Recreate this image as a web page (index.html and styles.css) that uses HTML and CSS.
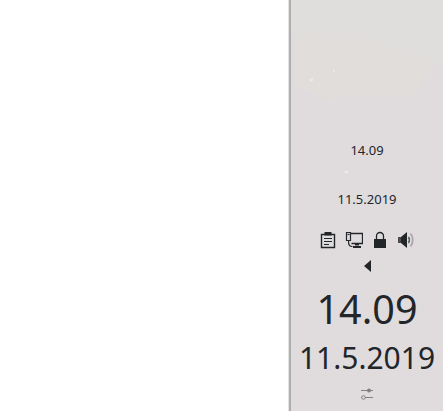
FILE: index.html
```html
<!DOCTYPE html>
<html lang="fi">

<head>
    <meta charset="UTF-8">
    <meta name="viewport" content="width=device-width, initial-scale=1.0">
    <title>Paneeli</title>
    <link rel="stylesheet" href="styles.css">
</head>

<body>
    <main class="desktop"></main>
    <aside class="panel">
        <svg class="wallpaper" width="152" height="411" viewBox="0 0 152 411">
            <path d="M0 37L64 35L146 63L152 64V0H0z" fill="#e0dedc" />
            <path d="M4 37H64L146 63L120 96L30 98L4 85z" fill="#e0dddb" />
            <path d="M30 98L120 96L146 63H152V190L60 175L20 140z" fill="#e0dcdd" />
            <path d="M18 79l4-1v3l-3 1zM42 70h2v2h-2zM52 172l5-2v4z" fill="#ebe9e8" />
        </svg>
        <div class="small-clock">
            <div class="small-time">14.09</div>
            <div class="small-date">11.5.2019</div>
        </div>
        <div class="tray">
            <svg class="tray-icon" width="18" height="18" viewBox="0 0 18 18">
                <path d="M5.500 1h7v3.500h-7z" fill="#232629" />
                <path d="M2.500 3.500h13v13h-13z" fill="none" stroke="#232629" stroke-width="1.400" />
                <path d="M5 7.500h8M5 10.500h8M5 13.500h5" fill="none" stroke="#232629" stroke-width="1.200" />
            </svg>
            <svg class="tray-icon" width="18" height="18" viewBox="0 0 18 18">
                <path d="M1.500 1.500h4v8h-4z" fill="none" stroke="#232629" stroke-width="1.200" />
                <path d="M2.500 3.500h2" stroke="#232629" stroke-width="1.200" />
                <path d="M6 2.500h11.500v10h-11" fill="none" stroke="#232629" stroke-width="1.300" />
                <path d="M3.500 9.500c0 5 1 6 4 6" fill="none" stroke="#232629" stroke-width="1.200" />
                <path d="M10 12.500h4v2h-4zM8 15h8v2H8z" fill="#232629" />
            </svg>
            <svg class="tray-icon" width="18" height="18" viewBox="0 0 18 18">
                <path d="M5.500 8V5a3.500 3.500 0 0 1 7 0v3" fill="none" stroke="#232629" stroke-width="1.300" />
                <path d="M3 8h12v9H3z" fill="#232629" />
            </svg>
            <svg class="tray-icon" width="18" height="18" viewBox="0 0 18 18">
                <path d="M1 6h3v6H1z" fill="#4d4d4d" />
                <path d="M4 6L10 1v16l-6-5z" fill="#232629" />
                <path d="M11.500 6c1.300 2 1.300 4 0 6" fill="none" stroke="#55575a" stroke-width="1.400" />
                <path d="M13.500 2.500c3 3.500 3 9.500 0 13" fill="none" stroke="#a8a8aa" stroke-width="1.800" />
            </svg>
        </div>
        <div class="expander">
            <svg width="8" height="12" viewBox="0 0 8 12">
                <path d="M8 0v12L1 6z" fill="#232629" />
            </svg>
        </div>
        <div class="big-time">14.09</div>
        <div class="big-date">11.5.2019</div>
        <div class="config">
            <svg width="14" height="14" viewBox="0 0 14 14">
                <path d="M1 3.500h12M1 10.500h12" stroke="#808183" />
                <circle cx="9" cy="3.500" r="2" fill="#808183" />
                <circle cx="3.500" cy="10.500" r="1.800" fill="#e0dcdf" stroke="#808183" />
            </svg>
        </div>
    </aside>
</body>

</html>
```

FILE: styles.css
```css
html,
body {
    height: 100%;
}

body {
    margin: 0;
    display: flex;
    overflow: hidden;
    background-color: #fff;
    font-family: 'Noto Sans', sans-serif;
    color: #232629;
}

.desktop {
    width: 288px;
    flex-shrink: 0;
    border-right: 1px solid #e4e4e4;
}

.panel {
    position: relative;
    flex-grow: 1;
    display: flex;
    flex-direction: column;
    align-items: center;
    border-left: 2px solid #aeaeae;
    background-color: #e0dcde;
}

.wallpaper {
    position: absolute;
    top: 0;
    left: 0;
}

.small-clock,
.tray,
.expander,
.big-time,
.big-date,
.config {
    position: relative;
}

.small-clock {
    padding-top: 141px;
    text-align: center;
    font-size: 13px;
    line-height: 18px;
}

.small-date {
    margin-top: 31px;
}

.tray {
    display: flex;
    gap: 8px;
    margin-top: 23px;
}

.tray-icon {
    display: block;
}

.expander {
    height: 12px;
    margin-top: 11px;
}

.expander svg {
    display: block;
}

.big-time {
    margin-top: 10px;
    font-size: 39.500px;
    line-height: 54px;
}

.big-date {
    margin-top: 2px;
    font-size: 30px;
    line-height: 40px;
}

.config {
    margin-top: 9px;
}

.config svg {
    display: block;
}
```
